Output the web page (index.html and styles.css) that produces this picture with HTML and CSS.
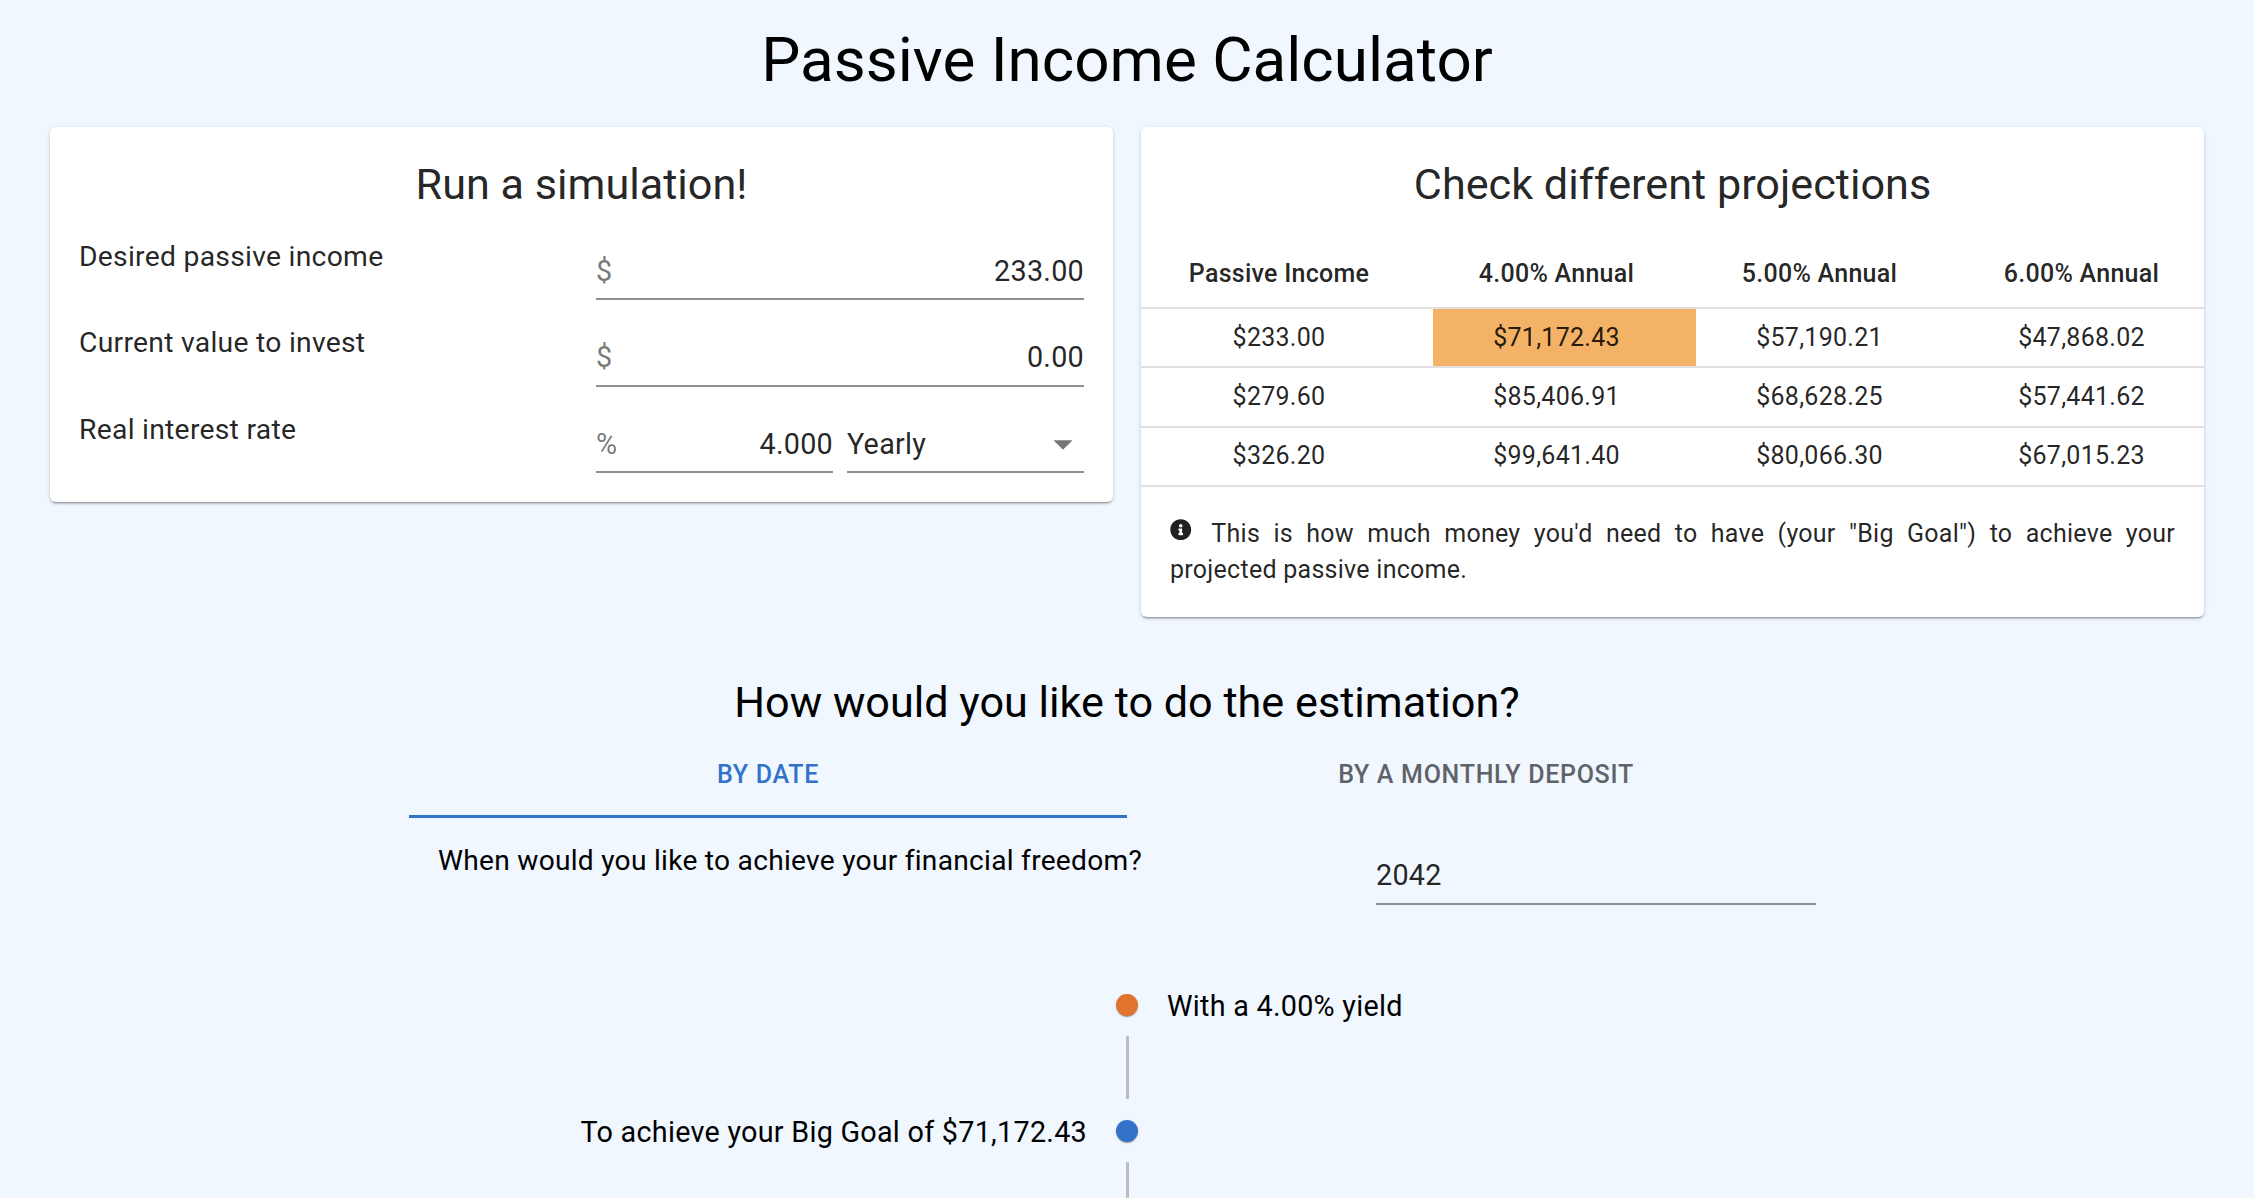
FILE: index.html
```html
<!DOCTYPE html>
<html lang="en">
<head>
    <meta charset="UTF-8">
    <meta name="viewport" content="width=device-width, initial-scale=1.0">
    <title>Passive Income Calculator</title>
    <link rel="stylesheet" href="styles.css">
</head>
<body>

<div class="page">
    <h1 class="page-title">Passive Income Calculator</h1>

    <div class="cards">
        <div class="card simulation">
            <h2 class="card-title">Run a simulation!</h2>
            <div class="form-row">
                <div class="form-label">Desired passive income</div>
                <div class="field">
                    <span class="adornment">$</span>
                    <span class="field-value">233.00</span>
                </div>
            </div>
            <div class="form-row">
                <div class="form-label">Current value to invest</div>
                <div class="field">
                    <span class="adornment">$</span>
                    <span class="field-value">0.00</span>
                </div>
            </div>
            <div class="form-row">
                <div class="form-label">Real interest rate</div>
                <div class="field-pair">
                    <div class="field">
                        <span class="adornment">%</span>
                        <span class="field-value">4.000</span>
                    </div>
                    <div class="field">
                        <span class="select-value">Yearly</span>
                        <svg class="select-arrow" viewBox="0 0 24 24"><path d="M7 10l5 5 5-5z"></path></svg>
                    </div>
                </div>
            </div>
        </div>

        <div class="card projections">
            <h2 class="card-title">Check different projections</h2>
            <table class="projection-table">
                <colgroup>
                    <col class="col-income">
                    <col class="col-rate">
                    <col class="col-rate">
                    <col>
                </colgroup>
                <thead>
                    <tr>
                        <th>Passive Income</th>
                        <th>4.00% Annual</th>
                        <th>5.00% Annual</th>
                        <th>6.00% Annual</th>
                    </tr>
                </thead>
                <tbody>
                    <tr>
                        <td>$233.00</td>
                        <td class="highlight">$71,172.43</td>
                        <td>$57,190.21</td>
                        <td>$47,868.02</td>
                    </tr>
                    <tr>
                        <td>$279.60</td>
                        <td>$85,406.91</td>
                        <td>$68,628.25</td>
                        <td>$57,441.62</td>
                    </tr>
                    <tr>
                        <td>$326.20</td>
                        <td>$99,641.40</td>
                        <td>$80,066.30</td>
                        <td>$67,015.23</td>
                    </tr>
                </tbody>
            </table>
            <p class="note">
                <svg class="note-icon" viewBox="0 0 512 512"><path d="M256 8C119 8 8 119 8 256s111 248 248 248 248-111 248-248S393 8 256 8zm0 110c23 0 42 19 42 42s-19 42-42 42-42-19-42-42 19-42 42-42zm56 254c0 7-5 12-12 12h-88c-7 0-12-5-12-12v-24c0-7 5-12 12-12h12v-64h-12c-7 0-12-5-12-12v-24c0-7 5-12 12-12h64c7 0 12 5 12 12v100h12c7 0 12 5 12 12v24z"></path></svg>
                This is how much money you'd need to have (your "Big Goal") to achieve your projected passive income.
            </p>
        </div>
    </div>

    <h2 class="section-title">How would you like to do the estimation?</h2>

    <div class="estimation">
        <div class="tabs">
            <div class="tab active">By date</div>
            <div class="tab">By a monthly deposit</div>
        </div>
        <div class="tab-panel">
            <div class="question">When would you like to achieve your financial freedom?</div>
            <div class="field year-field">
                <span class="field-value">2042</span>
            </div>
        </div>
    </div>

    <div class="timeline">
        <div class="timeline-item">
            <div class="timeline-left"></div>
            <div class="timeline-middle">
                <span class="dot dot-orange"></span>
                <span class="connector"></span>
            </div>
            <div class="timeline-right">With a 4.00% yield</div>
        </div>
        <div class="timeline-item">
            <div class="timeline-left">To achieve your Big Goal of $71,172.43</div>
            <div class="timeline-middle">
                <span class="dot dot-blue"></span>
                <span class="connector"></span>
            </div>
            <div class="timeline-right"></div>
        </div>
    </div>
</div>

</body>
</html>
```

FILE: styles.css
```css
body {
    margin: 0;
    background-color: #f0f7ff;
    font-family: Roboto, "Liberation Sans", sans-serif;
    font-size: 28.3px;
    line-height: 34.5px;
    letter-spacing: 0.00938em;
    color: rgba(0, 0, 0, 0.87);
}
.page {
    height: 1198px;
    overflow: hidden;
    padding: 19px 50px 0;
    box-sizing: border-box;
}
.page-title {
    margin: 0 0 27px;
    font-size: 62px;
    font-weight: 400;
    line-height: 81px;
    letter-spacing: 0;
    text-align: center;
    color: #000;
}
.cards {
    display: grid;
    grid-template-columns: minmax(0, 1fr) minmax(0, 1fr);
    align-items: start;
    gap: 28px;
}
.card {
    background-color: #fff;
    border-radius: 6px;
    box-shadow: 0 3px 1px -2px rgba(0, 0, 0, 0.2), 0 2px 2px 0 rgba(0, 0, 0, 0.14), 0 1px 5px 0 rgba(0, 0, 0, 0.12);
}
.simulation {
    padding: 35px 29px 29px;
}
.projections {
    padding-top: 35px;
}
.card-title {
    margin: 0;
    font-size: 43.2px;
    font-weight: 400;
    line-height: 46px;
    letter-spacing: 0;
    text-align: center;
}
.simulation .card-title {
    margin-bottom: 6px;
}
.form-row {
    display: grid;
    grid-template-columns: 1fr 1fr;
    column-gap: 29px;
    align-items: end;
    height: 86.3px;
}
.form-label {
    align-self: start;
    padding-top: 26px;
}
.field {
    display: flex;
    align-items: center;
    justify-content: space-between;
    height: 46px;
    padding-bottom: 4px;
    font-size: 28.75px;
    border-bottom: 2px solid #8f8f8f;
}
.field-pair {
    display: grid;
    grid-template-columns: 1fr 1fr;
    column-gap: 14px;
}
.adornment {
    color: rgba(0, 0, 0, 0.54);
}
.select-arrow {
    width: 46px;
    height: 46px;
    margin-right: -2px;
    fill: rgba(0, 0, 0, 0.54);
}
.projection-table {
    width: 100%;
    margin-top: 33px;
    border-collapse: collapse;
    table-layout: fixed;
    font-size: 25px;
    line-height: 30px;
}
.col-income {
    width: 292px;
}
.col-rate {
    width: 263px;
}
.projection-table th {
    height: 66px;
    padding: 0 16px 0 0;
    font-weight: 500;
    border-bottom: 2px solid #e0e0e0;
}
.projection-table td {
    height: 57.4px;
    padding: 0 16px 0 0;
    text-align: center;
    border-bottom: 2px solid #e0e0e0;
}
.projection-table th:last-child,
.projection-table td:last-child {
    padding-right: 0;
}
.highlight {
    background-color: #f4b266;
}
.note {
    margin: 0;
    padding: 29px;
    font-size: 25px;
    line-height: 36px;
    text-align: justify;
}
.note-icon {
    width: 21.5px;
    height: 21.5px;
    margin-right: 7px;
    vertical-align: 2px;
    fill: #212121;
}
.section-title {
    margin: 61px 0 0;
    font-size: 43.2px;
    font-weight: 400;
    line-height: 50px;
    letter-spacing: 0;
    text-align: center;
    color: #000;
}
.estimation {
    width: 1436px;
    margin: 0 auto;
}
.tabs {
    display: flex;
}
.tab {
    flex: 1;
    padding: 32px 0 25px;
    font-size: 25px;
    font-weight: 500;
    line-height: 30px;
    letter-spacing: 0.02857em;
    text-align: center;
    text-transform: uppercase;
    color: #5f6368;
    border-bottom: 3px solid transparent;
}
.tab.active {
    color: #3273c9;
    border-bottom-color: #3273c9;
}
.tab-panel {
    display: flex;
    justify-content: space-between;
    padding: 26px 29px 0;
}
.question {
    font-size: 28.15px;
    color: #000;
}
.year-field {
    width: 440px;
    margin-top: 8.5px;
}
.timeline {
    margin-top: 69px;
    font-size: 28.75px;
}
.timeline-item {
    display: grid;
    grid-template-columns: 1fr 22px 1fr;
    height: 126px;
}
.timeline-left {
    padding: 15px 29px 0 0;
    text-align: right;
    color: #000;
}
.timeline-right {
    padding: 15px 0 0 29px;
    color: #000;
}
.timeline-middle {
    display: flex;
    flex-direction: column;
    align-items: center;
    padding-top: 20px;
}
.dot {
    flex: none;
    width: 22px;
    height: 22px;
    border-radius: 50%;
    box-shadow: 0 2px 1px -1px rgba(0, 0, 0, 0.2), 0 1px 1px 0 rgba(0, 0, 0, 0.14), 0 1px 3px 0 rgba(0, 0, 0, 0.12);
}
.dot-orange {
    background-color: #e0742c;
}
.dot-blue {
    background-color: #3273c9;
}
.connector {
    flex: 1;
    width: 3px;
    margin: 20px 0 1px;
    background-color: #bdbdbd;
}
```
